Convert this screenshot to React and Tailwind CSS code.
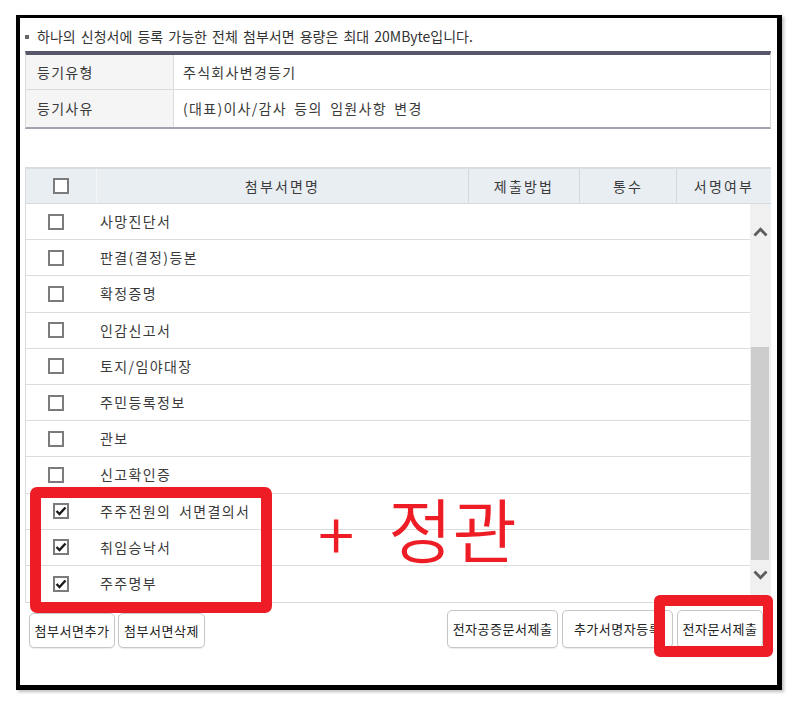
import React from "react";

const rows = [
  { name: "사망진단서", checked: false },
  { name: "판결(결정)등본", checked: false },
  { name: "확정증명", checked: false },
  { name: "인감신고서", checked: false },
  { name: "토지/임야대장", checked: false },
  { name: "주민등록정보", checked: false },
  { name: "관보", checked: false },
  { name: "신고확인증", checked: false },
  { name: "주주전원의 서면결의서", checked: true },
  { name: "취임승낙서", checked: true },
  { name: "주주명부", checked: true },
];

function Box({ checked }) {
  return (
    <div className="w-[16px] h-[16px] border-2 border-[#7b7b7b] bg-white flex items-center justify-center">
      {checked && (
        <svg width="12" height="10" viewBox="0 0 12 10">
          <polyline points="1.5,5 4.5,8 10.5,1.5" fill="none" stroke="#1a1a1a" strokeWidth="2.4" />
        </svg>
      )}
    </div>
  );
}

function Btn({ children, w }) {
  return (
    <div
      className={`${w} h-full bg-white border border-[#c6c6c6] rounded-[5px] flex items-center justify-center text-[13px] tracking-[0.5px] text-[#222] shadow-[0_1px_1px_rgba(0,0,0,0.08)]`}
    >
      {children}
    </div>
  );
}

export default function App() {
  return (
    <div
      className="relative w-[796px] h-[705px] bg-white pt-[15px] pl-[16px] overflow-hidden"
      style={{ fontFamily: '"Noto Sans CJK KR", "Noto Sans", sans-serif' }}
    >
      <div className="w-[766px] h-[675px] border-black border-t-[3px] border-l-[4px] border-r-[5px] border-b-[5px] bg-white pl-[5px] pr-[6px] shadow-[2px_2px_3px_rgba(0,0,0,0.25)] text-[#3a3a3a]">
        {/* notice */}
        <div className="h-[33px] pt-[4px] flex items-center text-[14px] tracking-[0px] [word-spacing:2px] text-[#333]">
          <span className="w-[4px] h-[4px] bg-[#666] mr-[8px]" />
          하나의 신청서에 등록 가능한 전체 첨부서면 용량은 최대 20MByte입니다.
        </div>

        {/* info table */}
        <div className="border-t-[4px] border-t-[#57576a] border-b-2 border-b-[#a3a3ad] border-x border-x-[#dcdcdc] text-[14px] tracking-[1.3px] [word-spacing:3px]">
          <div className="flex h-[35px] border-b border-[#dcdcdc]">
            <div className="w-[148px] bg-[#f5f5f5] border-r border-[#dcdcdc] flex items-center pl-[11px]">등기유형</div>
            <div className="flex-1 flex items-center pl-[9px]">주식회사변경등기</div>
          </div>
          <div className="flex h-[37px]">
            <div className="w-[148px] bg-[#f5f5f5] border-r border-[#dcdcdc] flex items-center pl-[11px]">등기사유</div>
            <div className="flex-1 flex items-center pl-[9px]">(대표)이사/감사 등의 임원사항 변경</div>
          </div>
        </div>

        {/* grid */}
        <div className="mt-[38px] text-[14px]">
          <div className="flex h-[37px] bg-[#e9eef3] border-t-2 border-[#d9dde2] border-b border-b-[#d5dae0] border-l border-l-[#d9dde2] tracking-[2.2px]">
            <div className="w-[70px] flex items-center pl-[27px]">
              <Box checked={false} />
            </div>
            <div className="w-[372px] border-l border-[#f4f6f8] flex items-center justify-center">첨부서면명</div>
            <div className="w-[111px] border-l border-[#d3d9df] flex items-center justify-center">제출방법</div>
            <div className="w-[97px] border-l border-[#d3d9df] flex items-center justify-center">통수</div>
            <div className="flex-1 border-l border-[#d3d9df] flex items-center justify-center">서명여부</div>
          </div>
          <div className="flex h-[399px] border-l border-[#dcdcdc] border-b border-b-[#d9d9d9] overflow-hidden tracking-[1.4px] [word-spacing:3px]">
            <div className="flex-1 flex flex-col">
              {rows.map((r) => (
                <div key={r.name} className="h-[36.2px] shrink-0 border-b border-[#dcdcdc] flex items-center last:border-b-0">
                  <div className={`w-[70px] ${r.checked ? "pl-[27px]" : "pl-[22px]"}`}>
                    <Box checked={r.checked} />
                  </div>
                  <div className="pl-[4px]">{r.name}</div>
                </div>
              ))}
            </div>
            <div className="w-[21px] bg-[#f0f0f0] flex flex-col">
              <div className="h-[56px] flex items-center justify-center">
                <svg width="15" height="10" viewBox="0 0 15 10">
                  <polyline points="1.5,8.5 7.5,2.2 13.5,8.5" fill="none" stroke="#5e5e5e" strokeWidth="2.8" />
                </svg>
              </div>
              <div className="h-[87px]" />
              <div className="h-[213px] ml-[1px] mr-[2px] bg-[#cdcdcd]" />
              <div className="h-[30px] flex items-center justify-center">
                <svg width="15" height="10" viewBox="0 0 15 10">
                  <polyline points="1.5,1.5 7.5,7.8 13.5,1.5" fill="none" stroke="#5e5e5e" strokeWidth="2.8" />
                </svg>
              </div>
            </div>
          </div>
        </div>

        {/* buttons */}
        <div className="mt-[7px] h-[38px] flex justify-between">
          <div className="flex gap-[3px] ml-[4px] mt-[3px] h-[35px]">
            <Btn w="w-[86px]">첨부서면추가</Btn>
            <Btn w="w-[87px]">첨부서면삭제</Btn>
          </div>
          <div className="flex gap-[4px] mr-[8px] h-[38px]">
            <Btn w="w-[111px]">전자공증문서제출</Btn>
            <Btn w="w-[111px]">추가서명자등록</Btn>
            <Btn w="w-[86px]">전자문서제출</Btn>
          </div>
        </div>
      </div>

      {/* annotations */}
      <div className="absolute left-[30px] top-[487px] w-[242px] h-[126px] border-[11px] border-[#ee1c25] rounded-[7px]" />
      <div className="absolute left-[654px] top-[595px] w-[119px] h-[62px] border-[11px] border-r-[10px] border-[#ee1c25] rounded-[6px]" />
      <div className="absolute left-[318px] top-[498px] text-[66px] font-[350] leading-none text-[#ee1c25]">+</div>
      <div className="absolute left-[388px] top-[493px] text-[70px] font-[350] leading-none text-[#ee1c25]">정관</div>
    </div>
  );
}
